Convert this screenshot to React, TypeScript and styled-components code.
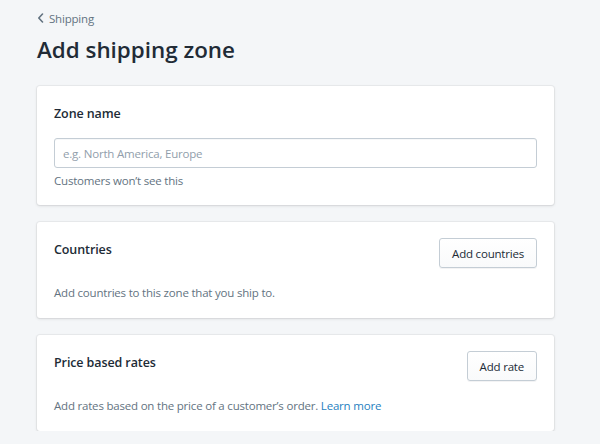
import React from 'react'
import styled, { createGlobalStyle } from 'styled-components'

const GlobalStyle = createGlobalStyle`
  html, body {
    margin: 0;
    padding: 0;
    background: #f4f6f8;
  }
  body {
    font-family: 'Open Sans', 'Noto Sans', sans-serif;
    color: #212b36;
    -webkit-font-smoothing: antialiased;
  }
`

const Page = styled.div`
  width: 517px;
  padding: 9px 0 0 37px;
`

const Breadcrumb = styled.a`
  display: flex;
  align-items: center;
  gap: 5px;
  height: 18px;
  font-size: 11.5px;
  letter-spacing: -0.2px;
  color: #637381;
  text-decoration: none;
  cursor: pointer;
`

const Title = styled.h1`
  margin: 9px 0 0;
  font-size: 22.4px;
  line-height: 28px;
  font-weight: 600;
  color: #212b36;
`

const Cards = styled.div`
  display: flex;
  flex-direction: column;
  gap: 17px;
  margin-top: 22px;
`

const Card = styled.section<{ $bottom?: number }>`
  background: #fff;
  border-radius: 3px;
  box-shadow: 0 0 0 1px rgba(63, 63, 68, 0.05), 0 1px 3px 0 rgba(63, 63, 68, 0.15);
  padding: 16px 17px ${({ $bottom }) => $bottom ?? 17}px;
`

const Header = styled.div`
  display: flex;
  justify-content: space-between;
  align-items: flex-start;
`

const Heading = styled.h2`
  margin: 2px 0 0;
  font-size: 12.5px;
  line-height: 20px;
  letter-spacing: -0.1px;
  font-weight: 600;
  color: #212b36;
`

const Input = styled.input`
  display: block;
  box-sizing: border-box;
  width: 100%;
  height: 30px;
  margin-top: 14px;
  padding: 0 8px;
  border: 1px solid #c4cdd5;
  border-radius: 3px;
  box-shadow: inset 0 1px 0 0 rgba(99, 115, 129, 0.05);
  font-family: inherit;
  font-size: 11.5px;
  letter-spacing: -0.2px;
  color: #212b36;
  outline: none;

  &::placeholder {
    color: #919eab;
  }
`

const Help = styled.p`
  margin: 5px 0 0;
  font-size: 11.5px;
  letter-spacing: -0.2px;
  line-height: 16px;
  color: #637381;
`

const Text = styled.p`
  margin: 17px 0 0;
  font-size: 11.5px;
  letter-spacing: -0.2px;
  line-height: 16px;
  color: #637381;
`

const Link = styled.a`
  color: #1f7fc0;
  text-decoration: none;
  cursor: pointer;
`

const Button = styled.button`
  height: 30px;
  padding: 0 12px;
  border: 1px solid #c4cdd5;
  border-radius: 3px;
  background: linear-gradient(to bottom, #fff, #f9fafb);
  box-shadow: 0 1px 0 0 rgba(22, 29, 37, 0.05);
  font-family: inherit;
  font-size: 11.5px;
  letter-spacing: -0.2px;
  color: #212b36;
  cursor: pointer;
`

const Chevron = () => (
  <svg width="7" height="10" viewBox="0 0 7 10" fill="none">
    <path d="M5.5 1 1.8 5l3.7 4" stroke="#637381" strokeWidth="1.6" strokeLinecap="round" strokeLinejoin="round" />
  </svg>
)

const App = () => (
  <>
    <GlobalStyle />
    <Page>
      <Breadcrumb>
        <Chevron />
        Shipping
      </Breadcrumb>
      <Title>Add shipping zone</Title>
      <Cards>
        <Card $bottom={16}>
          <Heading>Zone name</Heading>
          <Input placeholder="e.g. North America, Europe" />
          <Help>Customers won’t see this</Help>
        </Card>
        <Card>
          <Header>
            <Heading>Countries</Heading>
            <Button>Add countries</Button>
          </Header>
          <Text>Add countries to this zone that you ship to.</Text>
        </Card>
        <Card>
          <Header>
            <Heading>Price based rates</Heading>
            <Button>Add rate</Button>
          </Header>
          <Text>
            Add rates based on the price of a customer’s order. <Link>Learn more</Link>
          </Text>
        </Card>
      </Cards>
    </Page>
  </>
)

export default App
